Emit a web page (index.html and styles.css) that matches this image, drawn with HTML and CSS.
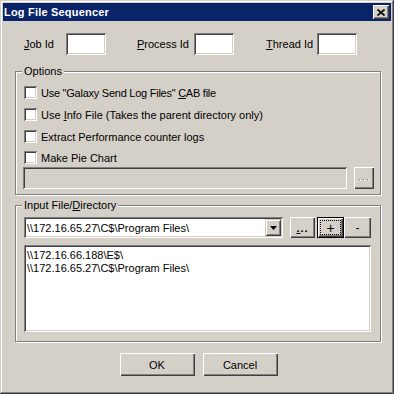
FILE: index.html
```html
<!DOCTYPE html>
<html lang="en">
<head>
    <meta charset="UTF-8">
    <title>Log File Sequencer</title>
    <link rel="stylesheet" href="styles.css">
</head>
<body>
    <div class="window">
        <div class="titlebar">
            <span class="title">Log File Sequencer</span>
            <button class="close-btn">
                <svg width="8" height="7" viewBox="0 0 8 7"><path d="M0.5 0.5 L7.5 6.5 M7.5 0.5 L0.5 6.5" stroke="#000" stroke-width="1.6"/></svg>
            </button>
        </div>

        <div class="ids">
            <label class="id-label job"><u>J</u>ob Id</label>
            <input class="field id-field" type="text">
            <label class="id-label process"><u>P</u>rocess Id</label>
            <input class="field id-field" type="text">
            <label class="id-label thread"><u>T</u>hread Id</label>
            <input class="field id-field" type="text">
        </div>

        <div class="group options">
            <span class="group-title">Options</span>
            <div class="check"><span class="box"></span><span class="narrow">Use "Galaxy Send Log Files" <u>C</u>AB file</span></div>
            <div class="check"><span class="box"></span><span>Use <u>I</u>nfo File (Takes the parent directory only)</span></div>
            <div class="check"><span class="box"></span><span>Extract Performance counter logs</span></div>
            <div class="check"><span class="box"></span><span>Make Pie Chart</span></div>
            <div class="path-row">
                <div class="field disabled path-field"></div>
                <div class="btn browse-disabled">
                    <!-- greyed-out "..." -->
                    <svg width="10" height="3" viewBox="0 0 10 3">
                        <rect x="1" y="1" width="1" height="1" fill="#fff"/>
                        <rect x="5" y="1" width="1" height="1" fill="#fff"/>
                        <rect x="9" y="1" width="1" height="1" fill="#fff"/>
                        <rect x="0" y="0" width="1" height="1" fill="#808080"/>
                        <rect x="4" y="0" width="1" height="1" fill="#808080"/>
                        <rect x="8" y="0" width="1" height="1" fill="#808080"/>
                    </svg>
                </div>
            </div>
        </div>

        <div class="group inputs">
            <span class="group-title">Input File/<u>D</u>irectory</span>
            <div class="combo-row">
                <div class="field combo">
                    <span class="combo-text">\\172.16.65.27\C$\Program Files\</span>
                    <span class="combo-arrow">
                        <svg width="7" height="4" viewBox="0 0 7 4"><path d="M0 0 H7 L3.5 4 Z" fill="#000"/></svg>
                    </span>
                </div>
                <button class="btn browse"><u>.</u>..</button>
                <button class="btn add default"><span class="focus">+</span></button>
                <button class="btn remove">-</button>
            </div>
            <div class="field listbox">
                <div>\\172.16.66.188\E$\</div>
                <div>\\172.16.65.27\C$\Program Files\</div>
            </div>
        </div>

        <div class="actions">
            <button class="btn push">OK</button>
            <button class="btn push">Cancel</button>
        </div>
    </div>
</body>
</html>
```

FILE: styles.css
```css
* {
    margin: 0;
    padding: 0;
    box-sizing: border-box;
}

body {
    font-family: "Liberation Sans", Arial, sans-serif;
    font-size: 11px;
    color: #000;
    background: #fff;
}

u {
    text-decoration: underline;
    text-underline-offset: 1px;
}

.window {
    width: 394px;
    height: 394px;
    padding: 3px;
    background: #d4d0c8;
    box-shadow: inset -1px -1px #404040, inset 1px 1px #d4d0c8,
                inset -2px -2px #808080, inset 2px 2px #fff;
}

.titlebar {
    height: 18px;
    background: #0a246a;
    display: flex;
    align-items: center;
    justify-content: space-between;
    padding: 0 2px 0 1px;
}

.title {
    color: #fff;
    font-weight: bold;
    font-size: 11px;
    letter-spacing: 0.2px;
}

.close-btn {
    width: 16px;
    height: 14px;
    border: none;
    background: #d4d0c8;
    display: flex;
    align-items: center;
    justify-content: center;
    box-shadow: inset 1px 1px #fff, inset -1px -1px #404040, inset -2px -2px #808080;
}

/* sunken edit fields */
.field {
    border: none;
    outline: none;
    background: #fff;
    box-shadow: inset 1px 1px #808080, inset -1px -1px #fff,
                inset 2px 2px #404040, inset -2px -2px #d4d0c8;
    font: inherit;
}

.field.disabled {
    background: #d4d0c8;
}

.ids {
    display: flex;
    align-items: center;
    height: 22px;
    margin-top: 12px;
}

.id-label {
    display: block;
}

.job {
    margin-left: 21px;
    width: 42px;
}

.process {
    margin-left: 31px;
    width: 57px;
}

.thread {
    margin-left: 32px;
    width: 51px;
}

.id-field {
    width: 40px;
    height: 22px;
}

/* group boxes */
.group {
    position: relative;
    margin-left: 12px;
    width: 366px;
    border: 1px solid #808080;
    box-shadow: inset 1px 1px #fff, 1px 1px #fff;
}

.group-title {
    position: absolute;
    top: -7px;
    left: 6px;
    padding: 0 2px;
    background: #d4d0c8;
    line-height: 13px;
}

.options {
    margin-top: 16px;
    height: 124px;
    padding: 14px 0 0 8px;
}

.check {
    display: flex;
    align-items: center;
    height: 13px;
    margin-bottom: 9px;
}

.check:nth-of-type(3) {
    margin-bottom: 8px;
}

.narrow {
    letter-spacing: -0.25px;
}

.box {
    width: 13px;
    height: 13px;
    margin-right: 4px;
    background: #fff;
    box-shadow: inset 1px 1px #808080, inset -1px -1px #fff,
                inset 2px 2px #404040, inset -2px -2px #d4d0c8;
}

.path-row {
    display: flex;
    margin-left: -1px;
    margin-top: -6px;
}

.path-field {
    width: 324px;
    height: 22px;
}

/* buttons */
.btn {
    border: none;
    background: #d4d0c8;
    font: inherit;
    color: #000;
    display: flex;
    align-items: center;
    justify-content: center;
    box-shadow: inset 1px 1px #fff, inset -1px -1px #404040, inset -2px -2px #808080;
}

.browse-disabled {
    width: 20px;
    height: 22px;
    margin-left: 7px;
    align-items: flex-end;
    padding-bottom: 7px;
}

.browse-disabled svg {
    display: block;
}

.inputs {
    margin-top: 10px;
    height: 137px;
    padding: 11px 0 0 8px;
}

.combo-row {
    display: flex;
    align-items: center;
}

.combo {
    width: 259px;
    height: 21px;
    display: flex;
    align-items: center;
    justify-content: space-between;
    padding: 2px 2px 2px 3px;
}

.combo-arrow {
    width: 16px;
    height: 17px;
    background: #d4d0c8;
    display: flex;
    align-items: center;
    justify-content: center;
    box-shadow: inset 1px 1px #d4d0c8, inset -1px -1px #404040,
                inset 2px 2px #fff, inset -2px -2px #808080;
}

.browse {
    width: 25px;
    height: 21px;
    margin-left: 7px;
    font-weight: bold;
    letter-spacing: 1px;
}

.add {
    width: 27px;
    height: 21px;
    margin-left: 2px;
    font-size: 14px;
}

.default {
    box-shadow: inset 0 0 0 1px #000, inset 2px 2px #fff,
                inset -2px -2px #404040, inset -3px -3px #808080;
}

.focus {
    width: 21px;
    height: 15px;
    border: 1px dotted #000;
    display: flex;
    align-items: center;
    justify-content: center;
    line-height: 1;
}

.remove {
    width: 27px;
    height: 21px;
    font-size: 12px;
}

.listbox {
    width: 347px;
    height: 87px;
    margin-top: 7px;
    padding: 4px 3px;
    line-height: 13px;
}

.actions {
    display: flex;
    justify-content: center;
    gap: 8px;
    margin-top: 11px;
    padding-left: 3px;
}

.push {
    width: 75px;
    height: 23px;
}
```
